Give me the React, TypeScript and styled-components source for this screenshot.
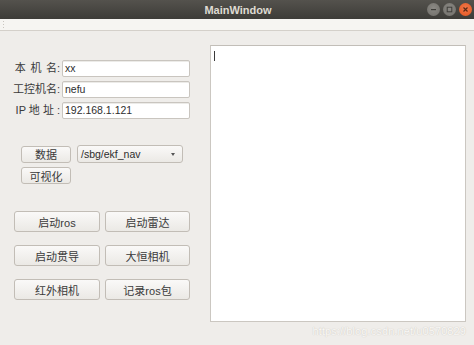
import React from "react";
import styled, { createGlobalStyle } from "styled-components";

const Global = createGlobalStyle`
  html, body { margin: 0; padding: 0; }
  body { background: #efedea; font-family: "Liberation Sans", "Noto Sans CJK SC", sans-serif; }
`;

const Window = styled.div`
  position: relative;
  width: 474px;
  height: 345px;
  background: #efedea;
  display: flex;
  flex-direction: column;
  overflow: hidden;
  font-family: "Liberation Sans", "Noto Sans CJK SC", sans-serif;
  color: #3c3c3c;
`;

const TitleBar = styled.div`
  position: relative;
  height: 19px;
  flex: none;
  background: linear-gradient(#54524d, #3d3c38);
  display: flex;
  align-items: center;
  justify-content: center;
`;

const Title = styled.div`
  font-weight: bold;
  font-size: 11px;
  color: #dfdbd2;
  margin-left: 2px;
`;

const Controls = styled.div`
  position: absolute;
  right: 2px;
  top: 3px;
  display: flex;
  gap: 3px;
`;

const Circle = styled.div<{ $close?: boolean }>`
  width: 13px;
  height: 13px;
  border-radius: 50%;
  background: ${(p) => (p.$close ? "radial-gradient(circle at 50% 40%, #f2784a, #e2541f)" : "radial-gradient(circle at 50% 40%, #8c8a85, #6f6d68)")};
  display: flex;
  align-items: center;
  justify-content: center;
`;

const MenuBar = styled.div`
  height: 11px;
  flex: none;
  background: #f6f5f2;
  border-bottom: 1px solid #d4d0ca;
  display: flex;
  align-items: center;
  padding-left: 2px;
`;

const Grip = styled.div`
  width: 3px;
  height: 9px;
  background-image: radial-gradient(#c9c5bf 0.6px, transparent 0.8px);
  background-size: 3px 3px;
`;

const Main = styled.div`
  flex: 1;
  display: flex;
`;

const Left = styled.div`
  width: 210px;
  flex: none;
  display: flex;
  flex-direction: column;
`;

const Form = styled.div`
  margin: 29px 0 0 13px;
  display: grid;
  grid-template-columns: 47px 128px;
  column-gap: 2px;
  row-gap: 4px;
  align-items: center;
`;

const Label = styled.div<{ $spread?: boolean }>`
  font-size: 11px;
  text-align: right;
  color: #3a3a3a;
  white-space: pre;
  line-height: 17px;
  word-spacing: ${(p) => (p.$spread ? "1.5px" : "0")};
`;

const Input = styled.div`
  height: 15px;
  background: #ffffff;
  border: 1px solid #c9c5bf;
  border-radius: 2px;
  font-size: 10.5px;
  line-height: 15px;
  padding-left: 2px;
  color: #2e2e2e;
  box-shadow: inset 0 1px 0 #ecebe8;
`;

const DataRow = styled.div`
  margin: 26px 0 0 21px;
  display: flex;
  align-items: center;
  gap: 6px;
`;

const Btn = styled.div<{ $w: number; $h: number }>`
  width: ${(p) => p.$w}px;
  height: ${(p) => p.$h}px;
  box-sizing: border-box;
  border: 1px solid #c2bdb6;
  border-radius: 3px;
  background: linear-gradient(#faf9f8, #ebe9e5);
  display: flex;
  align-items: center;
  justify-content: center;
  font-size: 11px;
  color: #3a3a3a;
  white-space: nowrap;
`;

const Combo = styled.div`
  width: 106px;
  height: 18px;
  box-sizing: border-box;
  border: 1px solid #c2bdb6;
  border-radius: 3px;
  background: linear-gradient(#faf9f8, #ebe9e5);
  display: flex;
  align-items: center;
  justify-content: space-between;
  padding: 0 7px 0 3px;
  font-size: 10.5px;
  color: #2e2e2e;
`;

const Arrow = styled.div`
  width: 0;
  height: 0;
  border-left: 2.5px solid transparent;
  border-right: 2.5px solid transparent;
  border-top: 3px solid #555;
`;

const SecondRow = styled.div`
  margin: 4px 0 0 21px;
`;

const Grid = styled.div`
  margin: 27px 0 0 14px;
  display: grid;
  grid-template-columns: 86px 85px;
  column-gap: 5px;
  row-gap: 13px;
`;

const Right = styled.div`
  flex: 1;
  display: flex;
  flex-direction: column;
  padding: 14px 9px 0 0;
`;

const TextArea = styled.div`
  width: 256px;
  height: 277px;
  box-sizing: border-box;
  background: #ffffff;
  border: 1px solid #cbc7c1;
  border-top-color: #c2beb8;
  position: relative;
`;

const Caret = styled.div`
  position: absolute;
  left: 3px;
  top: 5px;
  width: 1px;
  height: 10px;
  background: #3a3a3a;
`;

const Watermark = styled.div`
  position: absolute;
  right: 8px;
  bottom: 8px;
  font-size: 11px;
  color: #f9f8f6;
  text-shadow: 0 0 1px #cfcbc4, 0 0 1px #d6d2cc;
  letter-spacing: 0.1px;
`;

export default function App() {
  const buttons = ["启动ros", "启动雷达", "启动贯导", "大恒相机", "红外相机", "记录ros包"];
  return (
    <>
      <Global />
      <Window>
        <TitleBar>
          <Title>MainWindow</Title>
          <Controls>
            <Circle>
              <svg width="7" height="7" viewBox="0 0 7 7"><rect x="1" y="3" width="5" height="1.2" fill="#3e3d39" /></svg>
            </Circle>
            <Circle>
              <svg width="7" height="7" viewBox="0 0 7 7"><rect x="1.2" y="1.2" width="4.6" height="4.6" fill="none" stroke="#3e3d39" strokeWidth="1" /></svg>
            </Circle>
            <Circle $close>
              <svg width="7" height="7" viewBox="0 0 7 7"><path d="M1.5 1.5 L5.5 5.5 M5.5 1.5 L1.5 5.5" stroke="#5a2a16" strokeWidth="1.2" /></svg>
            </Circle>
          </Controls>
        </TitleBar>
        <MenuBar>
          <Grip />
        </MenuBar>
        <Main>
          <Left>
            <Form>
              <Label $spread>本 机 名:</Label>
              <Input>xx</Input>
              <Label>工控机名:</Label>
              <Input>nefu</Input>
              <Label>IP 地 址 :</Label>
              <Input>192.168.1.121</Input>
            </Form>
            <DataRow>
              <Btn $w={50} $h={17}>数据</Btn>
              <Combo>
                /sbg/ekf_nav
                <Arrow />
              </Combo>
            </DataRow>
            <SecondRow>
              <Btn $w={50} $h={17}>可视化</Btn>
            </SecondRow>
            <Grid>
              {buttons.map((b) => (
                <Btn key={b} $w={b === "启动ros" || b === "启动贯导" || b === "红外相机" ? 86 : 85} $h={21}>
                  {b}
                </Btn>
              ))}
            </Grid>
          </Left>
          <Right>
            <TextArea>
              <Caret />
            </TextArea>
          </Right>
        </Main>
        <Watermark>https://blog.csdn.net/u0570829</Watermark>
      </Window>
    </>
  );
}
